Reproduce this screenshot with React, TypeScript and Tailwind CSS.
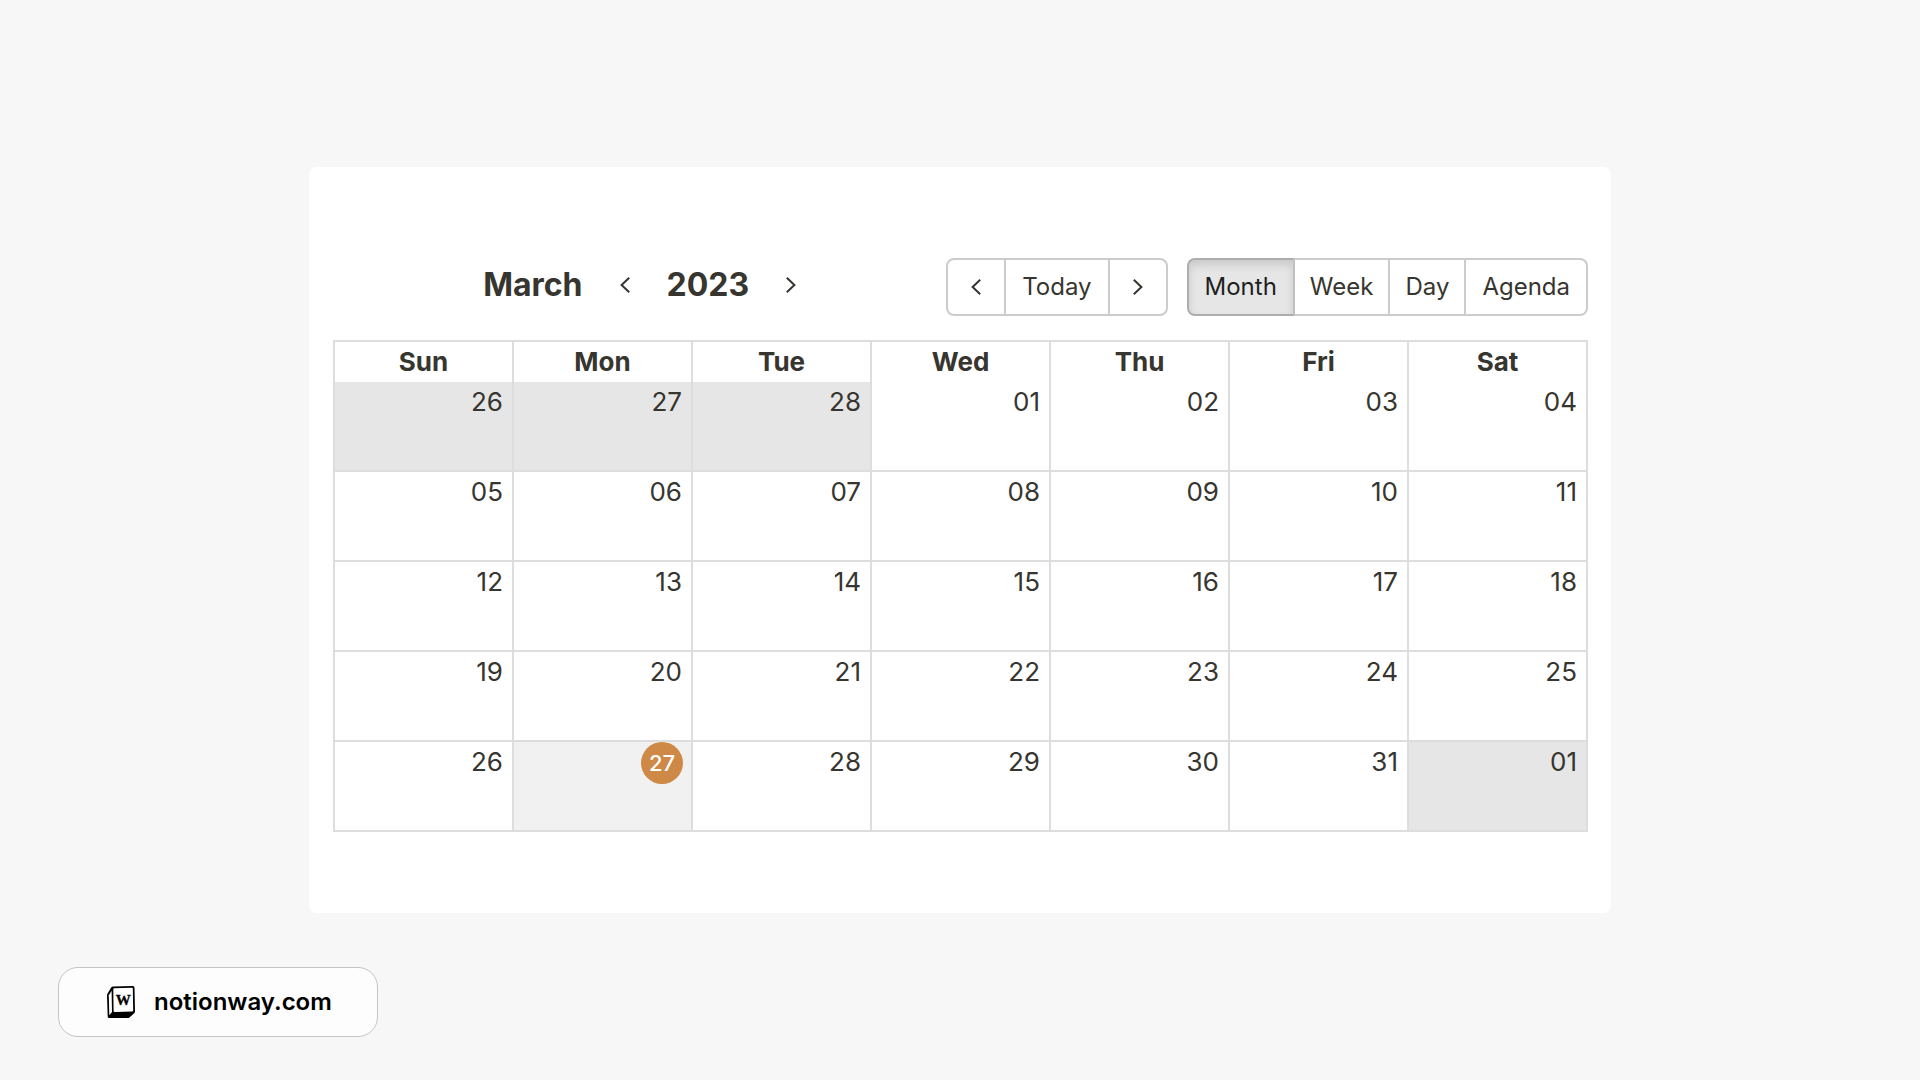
import React from "react";

type Day = { label: string; kind?: "off" | "today" };

const WEEKDAYS = ["Sun", "Mon", "Tue", "Wed", "Thu", "Fri", "Sat"];

const DAYS: Day[] = [
  ...["26", "27", "28"].map((label): Day => ({ label, kind: "off" })),
  ...Array.from({ length: 31 }, (_, i): Day => ({
    label: String(i + 1).padStart(2, "0"),
    kind: i === 26 ? "today" : undefined,
  })),
  { label: "01", kind: "off" },
];

const WEEKS = [0, 1, 2, 3, 4].map((w) => DAYS.slice(w * 7, w * 7 + 7));

function Chevron({ dir }: { dir: "left" | "right" }) {
  return (
    <svg viewBox="0 0 10 16" className="h-4 w-2.5" fill="none" stroke="currentColor" strokeWidth="2" aria-hidden="true">
      <path d={dir === "left" ? "M9.2 0.8 1.6 8l7.6 7.2" : "M0.8 0.8 8.4 8l-7.6 7.2"} />
    </svg>
  );
}

function Logo() {
  return (
    <svg viewBox="0 0 28 32" className="h-8 w-7" aria-hidden="true">
      <path d="M6 0.6 26 0Q27.4 0 27.5 1.5L28 25.5Q28 26.6 27.2 27.3L22.4 31.4Q21.8 32 20.8 32H2.4Q.7 32 .7 30.4L0 9.4Q0 8.3.6 7.4L4 1.8Q4.7.7 6 .6Z" fill="#000" />
      <path d="M7.2 2.2 25 1.8Q25.8 1.8 25.8 2.6L26.2 24.6Q26.2 25.4 25.4 25.4L7.6 25.9Q6.6 25.9 6.6 25L6.3 3.2Q6.3 2.3 7.2 2.2Z" fill="#fff" />
      <path d="M4.6 4.8 1.8 9.2 2.3 29.2 5 26Z" fill="#fff" />
      <text x="16.2" y="19" textAnchor="middle" fontFamily="Liberation Serif, serif" fontWeight="700" fontSize="15" fill="#000" stroke="#000" strokeWidth="0.3">
        W
      </text>
    </svg>
  );
}

export default function App() {
  return (
    <div className="flex min-h-screen flex-col bg-[#f7f7f7] pt-[167px] font-['Inter',sans-serif] text-[#37352f]">
      <main className="mx-auto w-full max-w-[1302px] rounded-lg bg-white pt-[91px] pr-[23px] pb-[81px] pl-6">
        <div className="flex items-center pb-6">
          <div className="flex flex-1 items-center justify-center gap-[37px] pb-1">
            <h1 className="text-[32px] leading-10 font-bold">March</h1>
            <button type="button" aria-label="Previous year">
              <Chevron dir="left" />
            </button>
            <span className="text-[32px] leading-10 font-bold">2023</span>
            <button type="button" aria-label="Next year">
              <Chevron dir="right" />
            </button>
          </div>
          <div className="flex h-[58px] overflow-hidden rounded-lg border-2 border-[#ccc] text-2xl">
            <button type="button" aria-label="Previous month" className="flex w-[58px] items-center justify-center border-r-2 border-[#ccc]">
              <Chevron dir="left" />
            </button>
            <button type="button" className="border-r-2 border-[#ccc] px-4">Today</button>
            <button type="button" aria-label="Next month" className="flex w-14 items-center justify-center">
              <Chevron dir="right" />
            </button>
          </div>
          <div className="ml-[19px] flex h-[58px] text-2xl">
            <button type="button" aria-pressed="true" className="rounded-l-lg border-2 border-[#adadad] border-r-[#c0c0c0] bg-[#e6e6e6] px-4 text-[#1f1f1f] shadow-[inset_0_5px_8px_rgba(0,0,0,0.125)]">
              Month
            </button>
            <button type="button" className="border-2 border-l-0 border-[#ccc] px-[15px]">Week</button>
            <button type="button" className="border-2 border-l-0 border-[#ccc] px-[15px]">Day</button>
            <button type="button" className="rounded-r-lg border-2 border-l-0 border-[#ccc] px-4">Agenda</button>
          </div>
        </div>

        <table className="w-full table-fixed border-separate border-spacing-0 border-t-2 border-l-2 border-[#ddd]">
          <thead>
            <tr>
              {WEEKDAYS.map((d) => (
                <th key={d} scope="col" className="h-10 border-r-2 border-[#ddd] p-0 text-[26px] leading-10 font-bold">
                  {d}
                </th>
              ))}
            </tr>
          </thead>
          <tbody>
            {WEEKS.map((week, w) => (
              <tr key={w}>
                {week.map((day, i) => (
                  <td
                    key={i}
                    className={
                      "h-[90px] border-r-2 border-b-2 border-[#ddd] p-0 text-right align-top text-[26px] leading-10 " +
                      (day.kind === "off" ? "bg-[#e6e6e6]" : day.kind === "today" ? "bg-[#f1f1f1]" : "")
                    }
                  >
                    {day.kind === "today" ? (
                      <span className="mr-2 ml-auto flex size-[42px] items-center justify-center rounded-full bg-[#cd8945] text-[22px] font-medium text-white">
                        {day.label}
                      </span>
                    ) : (
                      <span className="block pr-[9px]">{day.label}</span>
                    )}
                  </td>
                ))}
              </tr>
            ))}
          </tbody>
        </table>
      </main>

      <a href="https://notionway.com" className="mt-[54px] ml-[58px] flex h-[70px] w-80 items-center gap-[19px] self-start rounded-[20px] border border-[#c4c4c4] bg-[#fdfdfd] pl-12 text-2xl font-semibold text-black">
        <Logo />
        notionway.com
      </a>
    </div>
  );
}
